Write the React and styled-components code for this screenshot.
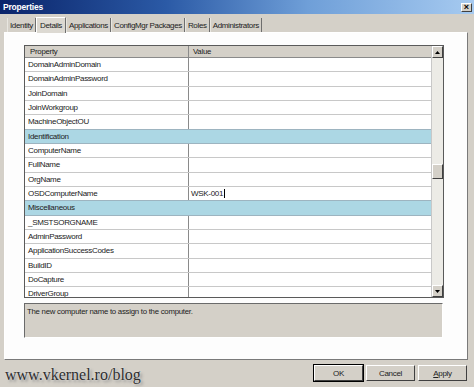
import React from "react";
import styled, { createGlobalStyle } from "styled-components";

const GlobalStyle = createGlobalStyle`
  html, body {
    margin: 0;
    padding: 0;
    background: #d4d0c8;
  }
  body {
    font-family: "Liberation Sans", Arial, sans-serif;
    color: #1a1a1a;
  }
`;

const tabs = ["Identity", "Details", "Applications", "ConfigMgr Packages", "Roles", "Administrators"];

const rows = [
  { name: "DomainAdminDomain" },
  { name: "DomainAdminPassword" },
  { name: "JoinDomain" },
  { name: "JoinWorkgroup" },
  { name: "MachineObjectOU" },
  { name: "Identification", category: true },
  { name: "ComputerName" },
  { name: "FullName" },
  { name: "OrgName" },
  { name: "OSDComputerName", value: "WSK-001", editing: true },
  { name: "Miscellaneous", category: true },
  { name: "_SMSTSORGNAME" },
  { name: "AdminPassword" },
  { name: "ApplicationSuccessCodes" },
  { name: "BuildID" },
  { name: "DoCapture" },
  { name: "DriverGroup" },
];

const Window = styled.div`
  position: relative;
  width: 474px;
  height: 387px;
  display: flex;
  flex-direction: column;
  background: #d4d0c8;
  overflow: hidden;
`;

const TitleBar = styled.div`
  height: 14px;
  display: flex;
  align-items: center;
  justify-content: space-between;
  padding: 0 2px 0 3px;
  background: linear-gradient(to right, #0a246a 0%, #2b5aa6 35%, #6f9fd8 65%, #a6caf0 100%);
`;

const Title = styled.span`
  color: #fff;
  font-weight: bold;
  font-size: 8.5px;
  letter-spacing: -0.2px;
`;

const CloseButton = styled.div`
  width: 11px;
  height: 9px;
  box-sizing: border-box;
  background: #d4d0c8;
  border: 1px solid;
  border-color: #fff #404040 #404040 #fff;
  display: flex;
  align-items: center;
  justify-content: center;
  font-size: 9px;
  font-weight: bold;
  line-height: 1;
  color: #000;
`;

const TabStrip = styled.div`
  height: 18px;
  display: flex;
  align-items: flex-end;
  padding-left: 7px;
`;

const Tab = styled.div`
  height: ${(p) => (p.$active ? "16px" : "14px")};
  box-sizing: border-box;
  display: flex;
  align-items: center;
  padding: 0 ${(p) => (p.$active ? "3px" : "2px")};
  font-size: 8px;
  letter-spacing: -0.35px;
  color: #222;
  border-right: 1px solid #6e6e6e;
  border-left: 1px solid ${(p) => (p.$active ? "#fff" : "#e8e6e0")};
  border-top: ${(p) => (p.$active ? "1px solid #fff" : "none")};
  background: ${(p) => (p.$active ? "#dcd9d2" : "#d4d0c8")};
  margin-bottom: ${(p) => (p.$active ? "-1px" : "0")};
  position: relative;
`;

const Panel = styled.div`
  margin: 0 6px 0 4px;
  height: 328px;
  box-sizing: border-box;
  background: #fdfdfd;
  border: 1px solid;
  border-color: #fff #7a7a7a #7a7a7a #fff;
  padding: 12px 0 0 19px;
  display: flex;
  flex-direction: column;
`;

const Grid = styled.div`
  width: 420px;
  height: 253px;
  box-sizing: border-box;
  border: 1px solid #5a5a5a;
  display: flex;
  overflow: hidden;
`;

const Table = styled.div`
  flex: 1;
  display: flex;
  flex-direction: column;
  overflow: hidden;
`;

const HeaderRow = styled.div`
  height: 11px;
  flex-shrink: 0;
  display: flex;
  background: #d4d0c8;
  border-bottom: 1px solid #8a8a8a;
  font-size: 7.8px;
  letter-spacing: -0.25px;
`;

const HeaderCell = styled.div`
  width: ${(p) => p.$w || "auto"};
  flex: ${(p) => (p.$w ? "none" : "1")};
  display: flex;
  align-items: center;
  padding-left: ${(p) => p.$pad}px;
  box-sizing: border-box;
  border-right: ${(p) => (p.$w ? "1px solid #8a8a8a" : "none")};
`;

const Row = styled.div`
  flex-shrink: 0;
  box-sizing: border-box;
  display: flex;
  background: ${(p) => (p.$category ? "#acd7e4" : "#fff")};
  border-bottom: 1px solid ${(p) => (p.$category ? "#9db4c0" : "#c8c8c8")};
  border-top: ${(p) => (p.$category ? "1px solid #9db4c0" : "none")};
  margin-top: ${(p) => (p.$category ? "-1px" : "0")};
  height: ${(p) => (p.$category ? "15.33px" : "14.33px")};
  font-size: 8px;
  letter-spacing: -0.3px;
  color: #222;
`;

const NameCell = styled.div`
  width: 164px;
  box-sizing: border-box;
  padding-left: 3px;
  display: flex;
  align-items: center;
  border-right: 1px solid ${(p) => (p.$category ? "transparent" : "#8a8a8a")};
  white-space: nowrap;
`;

const ValueCell = styled.div`
  flex: 1;
  padding-left: 2px;
  display: flex;
  align-items: center;
  white-space: nowrap;
`;

const Caret = styled.span`
  display: inline-block;
  width: 0;
  height: 9px;
  border-left: 1px solid #000;
  margin-left: 1px;
`;

const ScrollBar = styled.div`
  width: 11px;
  display: flex;
  flex-direction: column;
  background: #ecebe6;
  border-left: 1px solid #c8c8c8;
`;

const ArrowButton = styled.div`
  height: 12px;
  flex-shrink: 0;
  box-sizing: border-box;
  background: #d4d0c8;
  border: 1px solid;
  border-color: #fff #404040 #404040 #fff;
  display: flex;
  align-items: center;
  justify-content: center;
`;

const Track = styled.div`
  flex: 1;
  display: flex;
  flex-direction: column;
`;

const Thumb = styled.div`
  margin-top: ${(p) => p.$offset}px;
  height: 15px;
  box-sizing: border-box;
  background: #d4d0c8;
  border: 1px solid;
  border-color: #fff #404040 #404040 #fff;
`;

const Description = styled.div`
  margin-top: 5px;
  width: 419px;
  height: 35px;
  box-sizing: border-box;
  background: #d4d0c8;
  border: 1px solid;
  border-color: #6a6a6a #fff #fff #6a6a6a;
  padding: 3px 2px;
  font-size: 7.8px;
  letter-spacing: -0.25px;
  color: #222;
`;

const ButtonBar = styled.div`
  flex: 1;
  display: flex;
  justify-content: flex-end;
  align-items: flex-start;
  gap: 3px;
  padding: 5px 7px 0 0;
`;

const Button = styled.div`
  width: 49px;
  height: 16px;
  box-sizing: border-box;
  display: flex;
  align-items: center;
  justify-content: center;
  background: #d4d0c8;
  border: 1px solid;
  border-color: #fff #404040 #404040 #fff;
  outline: ${(p) => (p.$default ? "1px solid #000" : "none")};
  outline-offset: 0;
  font-size: 8px;
  letter-spacing: -0.3px;
  color: #222;
`;

const Watermark = styled.div`
  position: absolute;
  left: 5px;
  bottom: 3px;
  font-family: "Liberation Serif", "Times New Roman", serif;
  font-size: 16px;
  color: #2e2e2e;
  text-shadow: 0 0 2px #f4f4f4, 2px 2px 3px #8c8c8c;
`;

function Arrow({ up }) {
  return (
    <svg width="5" height="3" viewBox="0 0 5 3">
      <path d={up ? "M0 3 L2.5 0 L5 3 Z" : "M0 0 L5 0 L2.5 3 Z"} fill="#000" />
    </svg>
  );
}

export default function App() {
  return (
    <>
      <GlobalStyle />
      <Window>
        <TitleBar>
          <Title>Properties</Title>
          <CloseButton>×</CloseButton>
        </TitleBar>
        <TabStrip>
          {tabs.map((t) => (
            <Tab key={t} $active={t === "Details"}>
              {t}
            </Tab>
          ))}
        </TabStrip>
        <Panel>
          <Grid>
            <Table>
              <HeaderRow>
                <HeaderCell $w="164px" $pad={5}>Property</HeaderCell>
                <HeaderCell $pad={4}>Value</HeaderCell>
              </HeaderRow>
              {rows.map((r) => (
                <Row key={r.name} $category={r.category}>
                  <NameCell $category={r.category}>{r.name}</NameCell>
                  <ValueCell>
                    {r.value}
                    {r.editing && <Caret />}
                  </ValueCell>
                </Row>
              ))}
            </Table>
            <ScrollBar>
              <ArrowButton>
                <Arrow up />
              </ArrowButton>
              <Track>
                <Thumb $offset={106} />
              </Track>
              <ArrowButton>
                <Arrow />
              </ArrowButton>
            </ScrollBar>
          </Grid>
          <Description>The new computer name to assign to the computer.</Description>
        </Panel>
        <ButtonBar>
          <Button $default>OK</Button>
          <Button>Cancel</Button>
          <Button>
            <span>
              <u>A</u>pply
            </span>
          </Button>
        </ButtonBar>
        <Watermark>www.vkernel.ro/blog</Watermark>
      </Window>
    </>
  );
}
